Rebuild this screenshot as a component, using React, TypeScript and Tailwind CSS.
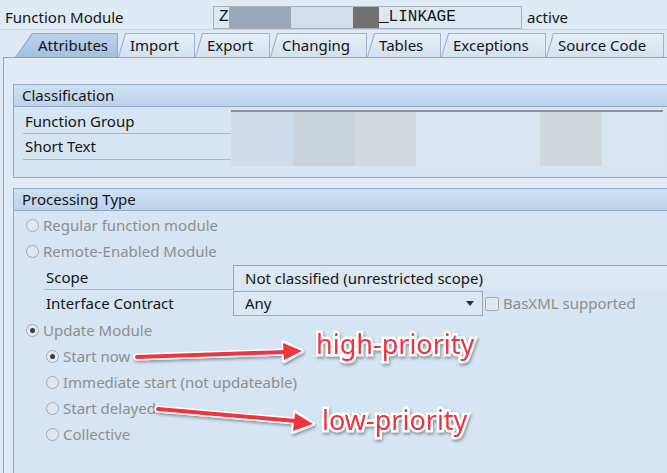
import React from "react"

const font = "font-['Noto_Sans','Liberation_Sans',sans-serif]"

type Tab = { label: string; width: number; active?: boolean }

const tabs: Tab[] = [
  { label: "Attributes", width: 103, active: true },
  { label: "Import", width: 77 },
  { label: "Export", width: 75 },
  { label: "Changing", width: 97 },
  { label: "Tables", width: 74 },
  { label: "Exceptions", width: 105 },
  { label: "Source Code", width: 118 },
]

// SAP style radio button (disabled look)
const Radio: React.FC<{ checked?: boolean }> = ({ checked }) => (
  <span className="w-[13px] h-[13px] rounded-full border border-[#a3a8ae] bg-[#dfe8f1] flex items-center justify-center shrink-0">
    {checked && <span className="w-[5px] h-[5px] rounded-full bg-[#3c3c3c]" />}
  </span>
)

const RadioRow: React.FC<{ label: string; checked?: boolean; indent?: boolean }> = ({ label, checked, indent }) => (
  <div className={`h-[26px] flex items-center gap-[4px] ${indent ? "pl-[32px]" : "pl-[12px]"}`}>
    <Radio checked={checked} />
    <span className="text-[#8e8e8e]">{label}</span>
  </div>
)

const GroupHeader: React.FC<{ title: string }> = ({ title }) => (
  <div className="h-[22px] flex items-center pl-[8px] bg-gradient-to-b from-[#cde0f1] to-[#bcd3ea] border-b border-[#8ba7c9]">
    {title}
  </div>
)

export default function App() {
  return (
    <div className={`w-[667px] h-[473px] overflow-hidden bg-[#e0eaf5] text-[15px] text-[#141414] ${font} relative`}>
      {/* Top bar */}
      <div className="h-[30px] flex items-start pt-[6px] border-b border-[#c9d3de] leading-[23px]">
        <span className="pl-[5px] w-[213px]">Function Module</span>
        <div className="w-[309px] h-[23px] border border-[#a9b2bc] bg-[#dde8f3] flex items-center font-['Liberation_Mono',monospace] text-[16px]">
          <span className="pl-[5px] w-[15px]">Z</span>
          <span className="w-[62px] h-[21px] bg-[#97a8b8]" />
          <span className="w-[62px] h-[21px] bg-[#d3dde8]" />
          <span className="w-[26px] h-[21px] bg-[#707171]" />
          <span>_LINKAGE</span>
        </div>
        <span className="pl-[5px]">active</span>
      </div>

      {/* Tabs */}
      <div className="h-[27px] flex items-end pl-[15px]">
        {tabs.map((t) =>
          t.active ? (
            <div
              key={t.label}
              style={{ width: t.width }}
              className="h-[24px] shrink-0 bg-[#8eaacd] pt-[1px] px-[1px] [clip-path:polygon(17px_0,100%_0,100%_100%,0_100%)]"
            >
              <div className="h-full flex items-center pl-[22px] bg-gradient-to-b from-[#bcd3ec] to-[#a2c0e2] [clip-path:polygon(17px_0,100%_0,100%_100%,0_100%)]">
                {t.label}
              </div>
            </div>
          ) : (
            <div
              key={t.label}
              style={{ width: t.width }}
              className="h-[24px] shrink-0 bg-[#9bb4d1] pt-[1px] px-[1px] [clip-path:polygon(7px_0,100%_0,100%_100%,0_100%)]"
            >
              <div className="h-full flex items-center pl-[11px] bg-gradient-to-b from-[#e6eef8] to-[#d3e1f0] [clip-path:polygon(7px_0,100%_0,100%_100%,0_100%)]">
                {t.label}
              </div>
            </div>
          )
        )}
      </div>

      {/* Panel */}
      <div className="ml-[3px] border-t border-l border-[#87a5c9] bg-[#e0ebf6] h-[420px] pt-[26px] pl-[9px]">
        {/* Classification */}
        <div className="w-[700px] border border-[#8ba7c9] bg-[#d5e5f3]">
          <GroupHeader title="Classification" />
          <div className="flex pt-[3px] pb-[11px]">
            <div className="w-[217px] pl-[9px]">
              <div className="h-[24px] flex items-center pl-[2px] border-b border-[#aeb6be]">Function Group</div>
              <div className="h-[26px] flex items-center pl-[2px] border-b border-[#aeb6be]">Short Text</div>
            </div>
            <div className="h-[56px] flex border-t-2 border-[#8f9396]">
              <span className="w-[62px] bg-[#cfdce9]" />
              <span className="w-[62px] bg-[#c9d2db]" />
              <span className="w-[61px] bg-[#d4d9dd]" />
              <span className="w-[124px] bg-[#d9e6f2]" />
              <span className="w-[62px] bg-[#d2d9dc]" />
              <span className="w-[61px] bg-[#d9e6f2]" />
            </div>
          </div>
        </div>

        {/* Processing Type */}
        <div className="mt-[10px] w-[700px] h-[300px] border border-[#8ba7c9] bg-[#d5e5f3]">
          <GroupHeader title="Processing Type" />
          <div className="pt-[1px]">
            <RadioRow label="Regular function module" />
            <RadioRow label="Remote-Enabled Module" />
            <div className="flex h-[26px] pt-[1px] pl-[30px]">
              <div className="w-[189px] flex items-center pl-[2px] border-b border-[#aeb6be]">Scope</div>
              <div className="flex-1 flex items-center pl-[11px] bg-[#dbe7f2] border-t border-l border-[#9ea3a8]">
                Not classified (unrestricted scope)
              </div>
            </div>
            <div className="flex h-[27px] pl-[30px] py-[1px]">
              <div className="w-[189px] flex items-center pl-[2px]">Interface Contract</div>
              <div className="w-[250px] flex items-center justify-between pl-[11px] pr-[8px] bg-[#dbe7f2] border border-[#a4a9ae]">
                <span>Any</span>
                <span className="w-0 h-0 border-l-[4px] border-r-[4px] border-t-[5px] border-l-transparent border-r-transparent border-t-[#25305a]" />
              </div>
              <div className="flex items-center gap-[4px] pl-[2px]">
                <span className="w-[14px] h-[14px] rounded-[2px] border border-[#a3a8ae] bg-[#dfe8f1]" />
                <span className="text-[#8e8e8e]">BasXML supported</span>
              </div>
            </div>
            <RadioRow label="Update Module" checked />
            <RadioRow label="Start now" checked indent />
            <RadioRow label="Immediate start (not updateable)" indent />
            <RadioRow label="Start delayed" indent />
            <RadioRow label="Collective" indent />
          </div>
        </div>
      </div>

      {/* Annotations */}
      <svg className="absolute left-0 top-0 pointer-events-none" width="667" height="473">
        <defs>
          <filter id="sh" x="-20%" y="-50%" width="140%" height="200%">
            <feDropShadow dx="1" dy="2" stdDeviation="1.5" floodColor="#000" floodOpacity="0.35" />
          </filter>
        </defs>
        <g filter="url(#sh)">
          <line x1="137" y1="357" x2="286" y2="352" stroke="#fff" strokeWidth="7" strokeLinecap="round" />
          <polygon points="283,342 302,351 284,361" fill="#fff" stroke="#fff" strokeWidth="4" strokeLinejoin="round" />
          <line x1="137" y1="357" x2="286" y2="352" stroke="#ee3440" strokeWidth="4" strokeLinecap="round" />
          <polygon points="283,343 302,351 284,360" fill="#ee3440" />
          <line x1="158" y1="409" x2="296" y2="421" stroke="#fff" strokeWidth="7" strokeLinecap="round" />
          <polygon points="295,412 313,424 293,432" fill="#fff" stroke="#fff" strokeWidth="4" strokeLinejoin="round" />
          <line x1="158" y1="409" x2="296" y2="421" stroke="#ee3440" strokeWidth="4" strokeLinecap="round" />
          <polygon points="295,413 313,424 293,431" fill="#ee3440" />
        </g>
      </svg>
      <div className="absolute left-[316px] top-[327px] text-[27px] text-[#ee3440] [paint-order:stroke_fill] [-webkit-text-stroke:5px_white] [filter:drop-shadow(1px_2px_1.5px_rgba(0,0,0,0.35))] font-['Noto_Sans',sans-serif] leading-[34px]">
        high-priority
      </div>
      <div className="absolute left-[322px] top-[403px] text-[27px] text-[#ee3440] [paint-order:stroke_fill] [-webkit-text-stroke:5px_white] [filter:drop-shadow(1px_2px_1.5px_rgba(0,0,0,0.35))] font-['Noto_Sans',sans-serif] leading-[34px]">
        low-priority
      </div>
    </div>
  )
}
